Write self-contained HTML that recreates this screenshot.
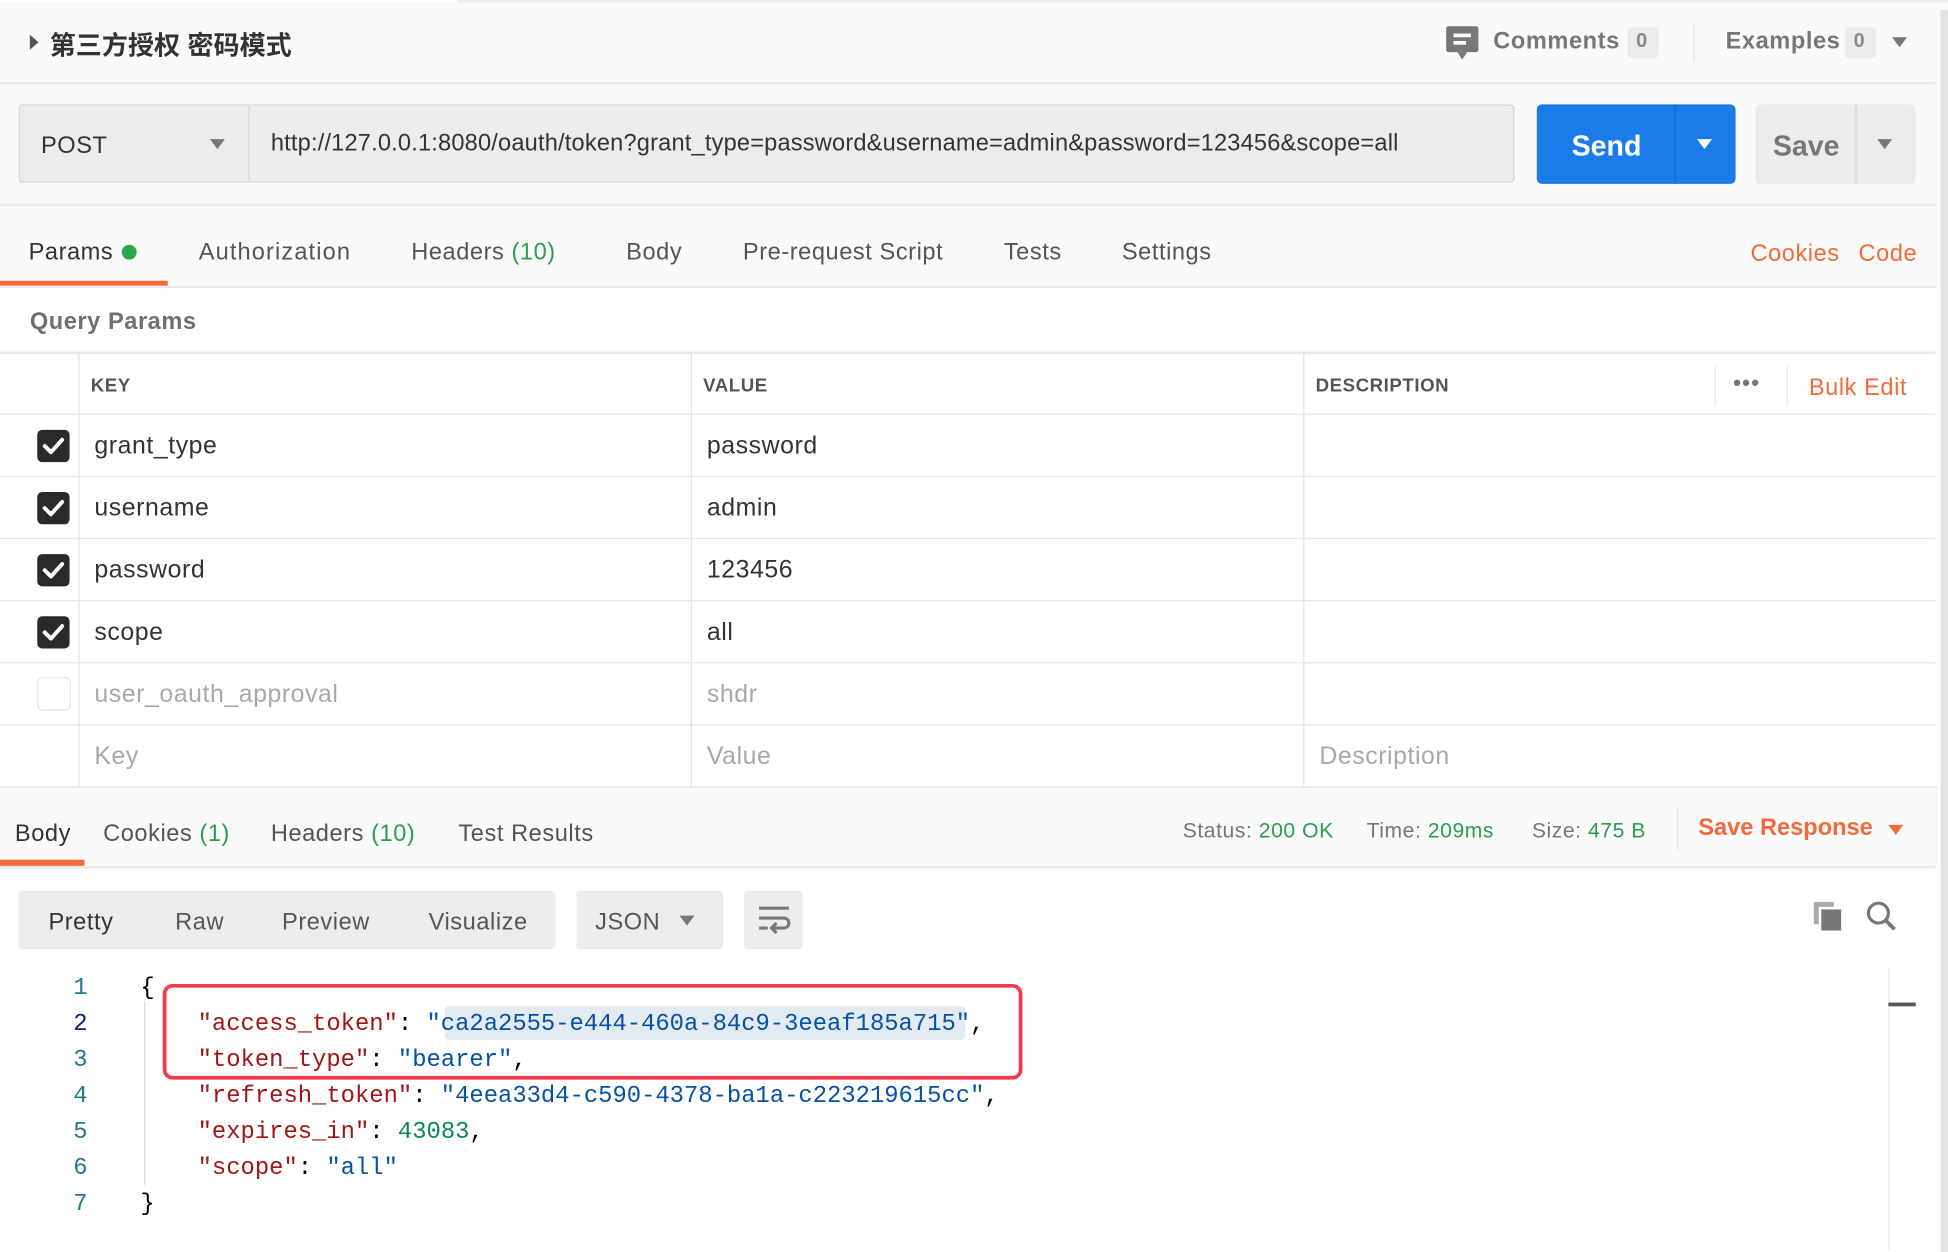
<!DOCTYPE html>
<html><head><meta charset="utf-8"><style>
html,body{margin:0;padding:0;width:1948px;height:1250px;overflow:hidden;background:#fff}
#w{position:absolute;left:0;top:0;width:1568px;height:1006px;transform:scale(1.24235);transform-origin:0 0;font-family:"Liberation Sans","Noto Sans CJK SC",sans-serif;color:#333;background:#fff}
.a{position:absolute;white-space:nowrap}
.t{letter-spacing:0.45px;margin-top:2px}
.bg{position:absolute}
.mono{font-family:"Liberation Mono","DejaVu Sans Mono",monospace;font-size:19.2px}
.k{color:#a31515}.s{color:#0451a5}.n{color:#098658}
.cb{position:absolute;left:30px;width:26px;height:26px;border-radius:4px;background:#2a2a2a}
.cb svg{position:absolute;left:4px;top:5px}
.g{color:#2a9d4f}.o{color:#f26b3a}
.tri{position:absolute;width:0;height:0;border-left:6px solid transparent;border-right:6px solid transparent;border-top:8px solid #777}
</style></head><body><div id="w">
<div class="bg" style="left:0;top:0;width:1568px;height:232px;background:#fafafa"></div>
<div class="bg" style="left:0;top:0;width:368px;height:2px;background:#fff"></div>
<div class="bg" style="left:368px;top:0;width:1200px;height:2px;background:#eee"></div>
<div class="bg" style="left:0;top:66px;width:1558px;height:2px;background:#eaeaea"></div>
<div class="bg" style="left:1562px;top:8px;width:6px;height:1000px;background:#e2e2e2"></div>
<div class="a" style="left:24px;top:28px;width:0;height:0;border-top:6px solid transparent;border-bottom:6px solid transparent;border-left:7px solid #555"></div>
<div class="a" style="left:40px;top:21px;font-size:21px;font-weight:bold;color:#333">第三方授权 密码模式</div>
<svg class="a" style="left:1164px;top:21px" width="27" height="28" viewBox="0 0 27 28"><rect x="0" y="0" width="26" height="21" rx="2" fill="#777"/><path d="M9 21 L13 27 L17 21Z" fill="#777"/><rect x="6" y="6" width="14" height="3" fill="#fafafa"/><rect x="6" y="12" width="10" height="3" fill="#fafafa"/></svg>
<div class="a t" style="left:1202px;top:21px;font-size:19px;font-weight:bold;color:#777">Comments</div>
<div class="bg" style="left:1310px;top:22px;width:25px;height:25px;background:#ececec;border-radius:3px"></div>
<div class="a" style="left:1317px;top:25px;font-size:16px;font-weight:bold;color:#888">0</div>
<div class="bg" style="left:1363px;top:20px;width:1px;height:30px;background:#e2e2e2"></div>
<div class="a t" style="left:1389px;top:21px;font-size:19px;font-weight:bold;color:#777">Examples</div>
<div class="bg" style="left:1485px;top:22px;width:25px;height:25px;background:#ececec;border-radius:3px"></div>
<div class="a" style="left:1492px;top:25px;font-size:16px;font-weight:bold;color:#888">0</div>
<div class="tri" style="left:1523px;top:30px"></div>
<div class="bg" style="left:15px;top:84px;width:1202px;height:61px;background:#ececec;border:1px solid #d6d6d6;border-radius:3px"></div>
<div class="bg" style="left:200px;top:85px;width:1px;height:61px;background:#d6d6d6"></div>
<div class="a t" style="left:33px;top:105px;font-size:19px;color:#333">POST</div>
<div class="tri" style="left:169px;top:112px"></div>
<div class="a" style="left:218px;top:105px;font-size:19px;color:#333;letter-spacing:0.15px">http://127.0.0.1:8080/oauth/token?grant_type=password&amp;username=admin&amp;password=123456&amp;scope=all</div>
<div class="bg" style="left:1237px;top:84px;width:160px;height:64px;background:#1a7ce8;border-radius:4px"></div>
<div class="bg" style="left:1348px;top:84px;width:1px;height:64px;background:#1669c6"></div>
<div class="a" style="left:1265px;top:104px;font-size:23px;font-weight:bold;color:#fff">Send</div>
<div class="tri" style="left:1366px;top:112px;border-top-color:#fff"></div>
<div class="bg" style="left:1413px;top:84px;width:129px;height:64px;background:#ececec;border-radius:4px"></div>
<div class="bg" style="left:1493px;top:84px;width:2px;height:64px;background:#dcdcdc"></div>
<div class="a" style="left:1427px;top:104px;font-size:23px;font-weight:bold;color:#777">Save</div>
<div class="tri" style="left:1511px;top:112px"></div>
<div class="bg" style="left:0;top:164px;width:1558px;height:2px;background:#eaeaea"></div>
<div class="a t" style="left:23px;top:191px;font-size:19px;color:#333">Params</div>
<div class="bg" style="left:98px;top:197px;width:12px;height:12px;border-radius:6px;background:#2aa84a"></div>
<div class="a t" style="left:160px;top:191px;font-size:19px;color:#555;letter-spacing:0.9px">Authorization</div>
<div class="a t" style="left:331px;top:191px;font-size:19px;color:#555">Headers <span class="g">(10)</span></div>
<div class="a t" style="left:504px;top:191px;font-size:19px;color:#555">Body</div>
<div class="a t" style="left:598px;top:191px;font-size:19px;color:#555">Pre-request Script</div>
<div class="a t" style="left:808px;top:191px;font-size:19px;color:#555">Tests</div>
<div class="a t" style="left:903px;top:191px;font-size:19px;color:#555">Settings</div>
<div class="a o t" style="left:1409px;top:192px;font-size:19px">Cookies</div>
<div class="a o t" style="left:1496px;top:192px;font-size:19px">Code</div>
<div class="bg" style="left:0;top:226px;width:135px;height:4px;background:#f26b3a"></div>
<div class="bg" style="left:0;top:230px;width:1558px;height:2px;background:#eaeaea"></div>
<div class="a t" style="left:24px;top:247px;font-size:19px;font-weight:bold;color:#707070">Query Params</div>
<div class="bg" style="left:0;top:283px;width:1558px;height:2px;background:#e8e8e8"></div>
<div class="bg" style="left:63px;top:285px;width:1px;height:348px;background:#e3e3e3"></div>
<div class="bg" style="left:556px;top:285px;width:1px;height:348px;background:#e3e3e3"></div>
<div class="bg" style="left:1049px;top:285px;width:1px;height:348px;background:#e3e3e3"></div>
<div class="bg" style="left:1380px;top:295px;width:1px;height:32px;background:#e3e3e3"></div>
<div class="bg" style="left:1438px;top:295px;width:1px;height:32px;background:#e3e3e3"></div>
<div class="a t" style="left:73px;top:300px;font-size:15px;font-weight:bold;color:#555">KEY</div>
<div class="a t" style="left:566px;top:300px;font-size:15px;font-weight:bold;color:#555">VALUE</div>
<div class="a t" style="left:1059px;top:300px;font-size:15px;font-weight:bold;color:#555">DESCRIPTION</div>
<div class="a" style="left:1395px;top:298px;font-size:18px;font-weight:bold;color:#777;letter-spacing:1px">•••</div>
<div class="a o t" style="left:1456px;top:300px;font-size:19px">Bulk Edit</div>
<div class="bg" style="left:0;top:333px;width:1558px;height:1px;background:#e6e6e6"></div>
<div class="bg" style="left:0;top:383px;width:1558px;height:1px;background:#e6e6e6"></div>
<div class="bg" style="left:0;top:433px;width:1558px;height:1px;background:#e6e6e6"></div>
<div class="bg" style="left:0;top:483px;width:1558px;height:1px;background:#e6e6e6"></div>
<div class="bg" style="left:0;top:533px;width:1558px;height:1px;background:#e6e6e6"></div>
<div class="bg" style="left:0;top:583px;width:1558px;height:1px;background:#e6e6e6"></div>
<div class="cb" style="top:346px"><svg width="18" height="16" viewBox="0 0 18 16"><path d="M2 8 L7 13 L16 3" stroke="#fff" stroke-width="3.2" fill="none" stroke-linecap="round" stroke-linejoin="round"/></svg></div>
<div class="cb" style="top:396px"><svg width="18" height="16" viewBox="0 0 18 16"><path d="M2 8 L7 13 L16 3" stroke="#fff" stroke-width="3.2" fill="none" stroke-linecap="round" stroke-linejoin="round"/></svg></div>
<div class="cb" style="top:446px"><svg width="18" height="16" viewBox="0 0 18 16"><path d="M2 8 L7 13 L16 3" stroke="#fff" stroke-width="3.2" fill="none" stroke-linecap="round" stroke-linejoin="round"/></svg></div>
<div class="cb" style="top:496px"><svg width="18" height="16" viewBox="0 0 18 16"><path d="M2 8 L7 13 L16 3" stroke="#fff" stroke-width="3.2" fill="none" stroke-linecap="round" stroke-linejoin="round"/></svg></div>
<div class="bg" style="left:30px;top:545px;width:25px;height:25px;border:1px solid #e2e2e2;border-radius:4px;background:#fff"></div>
<div class="a t" style="left:76px;top:346px;font-size:20px">grant_type</div>
<div class="a t" style="left:569px;top:346px;font-size:20px">password</div>
<div class="a t" style="left:76px;top:396px;font-size:20px">username</div>
<div class="a t" style="left:569px;top:396px;font-size:20px">admin</div>
<div class="a t" style="left:76px;top:446px;font-size:20px">password</div>
<div class="a t" style="left:569px;top:446px;font-size:20px">123456</div>
<div class="a t" style="left:76px;top:496px;font-size:20px">scope</div>
<div class="a t" style="left:569px;top:496px;font-size:20px">all</div>
<div class="a t" style="left:76px;top:546px;font-size:20px;color:#a8a8a8">user_oauth_approval</div>
<div class="a t" style="left:569px;top:546px;font-size:20px;color:#a8a8a8">shdr</div>
<div class="a t" style="left:76px;top:596px;font-size:20px;color:#a8a8a8">Key</div>
<div class="a t" style="left:569px;top:596px;font-size:20px;color:#a8a8a8">Value</div>
<div class="a t" style="left:1062px;top:596px;font-size:20px;color:#a8a8a8">Description</div>
<div class="bg" style="left:0;top:633px;width:1560px;height:64px;background:#fafafa;border-top:1px solid #e6e6e6"></div>
<div class="a t" style="left:12px;top:659px;font-size:19px;color:#333">Body</div>
<div class="a t" style="left:83px;top:659px;font-size:19px;color:#555">Cookies <span class="g">(1)</span></div>
<div class="a t" style="left:218px;top:659px;font-size:19px;color:#555">Headers <span class="g">(10)</span></div>
<div class="a t" style="left:369px;top:659px;font-size:19px;color:#555">Test Results</div>
<div class="a t" style="left:952px;top:657px;font-size:17px;color:#777">Status: <span class="g">200 OK</span></div>
<div class="a t" style="left:1100px;top:657px;font-size:17px;color:#777">Time: <span class="g">209ms</span></div>
<div class="a t" style="left:1233px;top:657px;font-size:17px;color:#777">Size: <span class="g">475 B</span></div>
<div class="bg" style="left:1350px;top:650px;width:1px;height:34px;background:#e2e2e2"></div>
<div class="a o" style="left:1367px;top:656px;font-size:19px;font-weight:bold">Save Response</div>
<div class="tri" style="left:1520px;top:664px;border-top-color:#f26b3a"></div>
<div class="bg" style="left:0;top:692px;width:68px;height:5px;background:#f26b3a"></div>
<div class="bg" style="left:0;top:697px;width:1558px;height:2px;background:#eaeaea"></div>
<div class="bg" style="left:15px;top:717px;width:432px;height:47px;background:#ececec;border-radius:3px"></div>
<div class="a t" style="left:39px;top:730px;font-size:19px;color:#333">Pretty</div>
<div class="a t" style="left:141px;top:730px;font-size:19px;color:#555">Raw</div>
<div class="a t" style="left:227px;top:730px;font-size:19px;color:#555">Preview</div>
<div class="a t" style="left:345px;top:730px;font-size:19px;color:#555">Visualize</div>
<div class="bg" style="left:464px;top:717px;width:118px;height:47px;background:#ececec;border-radius:3px"></div>
<div class="a t" style="left:479px;top:730px;font-size:19px;color:#555">JSON</div>
<div class="tri" style="left:547px;top:737px"></div>
<div class="bg" style="left:599px;top:717px;width:47px;height:47px;background:#ececec;border-radius:3px"></div>
<svg class="a" style="left:609px;top:727px" width="28" height="28" viewBox="0 0 28 28"><path d="M2 4H26M2 12H22a4 4 0 0 1 0 8H14M2 20H9" stroke="#777" stroke-width="2.5" fill="none"/><path d="M16 16L12 20L16 24" stroke="#777" stroke-width="2.5" fill="none"/></svg>
<svg class="a" style="left:1459px;top:725px" width="26" height="26" viewBox="0 0 26 26"><rect x="1" y="1" width="16" height="18" fill="#aaa"/><rect x="6" y="6" width="18" height="19" fill="#777" stroke="#fff" stroke-width="2"/></svg>
<svg class="a" style="left:1501px;top:724px" width="26" height="26" viewBox="0 0 26 26"><circle cx="11" cy="11" r="8" stroke="#777" stroke-width="2.6" fill="none"/><path d="M17 17L24 24" stroke="#777" stroke-width="3"/></svg>
<div class="bg" style="left:1520px;top:780px;width:1px;height:226px;background:#e6e6e6"></div>
<div class="bg" style="left:1520px;top:807px;width:22px;height:3px;background:#555"></div>
<div class="bg" style="left:116px;top:806px;width:1px;height:148px;background:#ddd"></div>
<div class="bg" style="left:358px;top:810px;width:419px;height:27px;background:#e4eaf1;border-radius:3px"></div>
<div class="a mono" style="left:59px;top:781px;line-height:29px;color:#237893">1<br><span style="color:#0b216f">2</span><br>3<br>4<br>5<br>6<br>7</div>
<div class="a mono" style="left:113px;top:781px;line-height:29px;color:#000">{<br>&nbsp;&nbsp;&nbsp;&nbsp;<span class="k">"access_token"</span>: <span class="s">"ca2a2555-e444-460a-84c9-3eeaf185a715"</span>,<br>&nbsp;&nbsp;&nbsp;&nbsp;<span class="k">"token_type"</span>: <span class="s">"bearer"</span>,<br>&nbsp;&nbsp;&nbsp;&nbsp;<span class="k">"refresh_token"</span>: <span class="s">"4eea33d4-c590-4378-ba1a-c223219615cc"</span>,<br>&nbsp;&nbsp;&nbsp;&nbsp;<span class="k">"expires_in"</span>: <span class="n">43083</span>,<br>&nbsp;&nbsp;&nbsp;&nbsp;<span class="k">"scope"</span>: <span class="s">"all"</span><br>}</div>
<div class="bg" style="left:131px;top:792px;width:686px;height:71px;border:3px solid #f23a4c;border-radius:8px"></div>
</div></body></html>
